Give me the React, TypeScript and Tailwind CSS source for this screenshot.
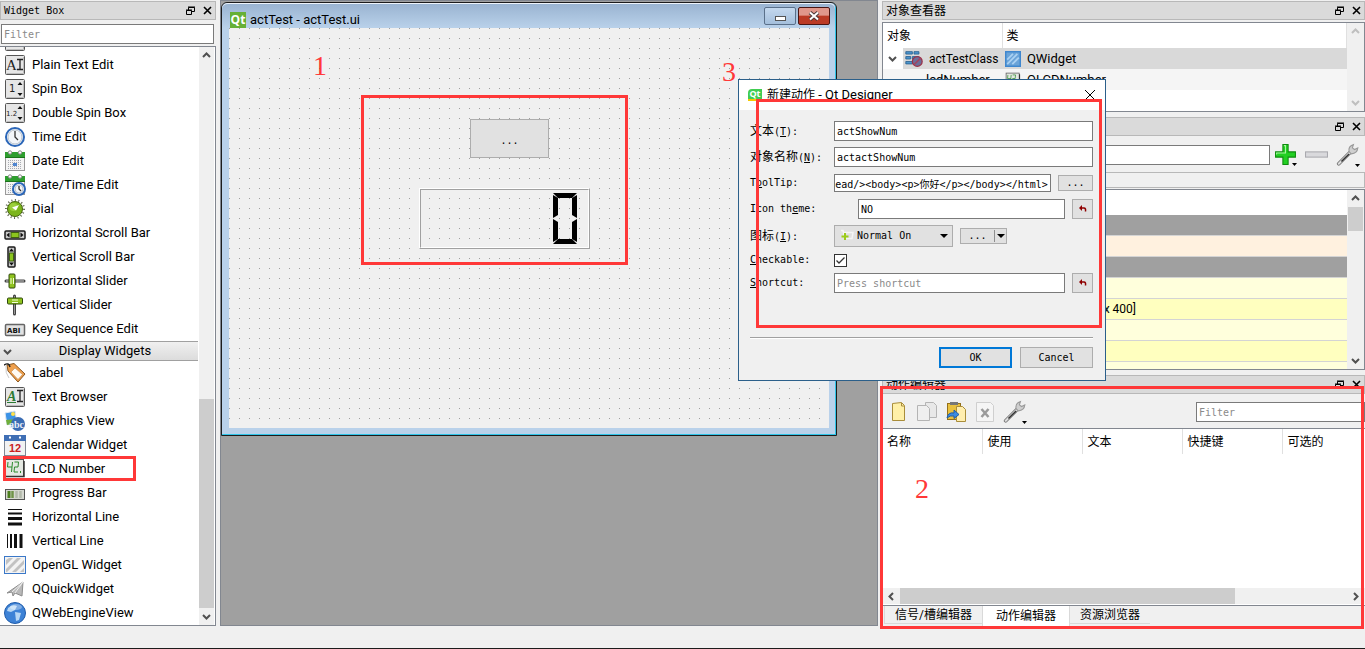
import { useEffect, useRef } from "react"
import type { ReactNode } from "react"

const mono = "font-['DejaVu_Sans_Mono','Noto_Sans_CJK_SC',monospace] text-[10px]"
const field = "min-w-0 border border-[#7a7a7a] bg-white text-black placeholder-[#8a8a8a] outline-none"

const Svg = ({ children, size = 22 }: { children: ReactNode; size?: number }) => (
    <svg width={size} height={size} viewBox="0 0 22 22" className="shrink-0" aria-hidden="true">
        {children}
    </svg>
)

const Tile = () => (
    <>
        <rect x="1.5" y="1.5" width="19" height="19" rx="1" fill="#e6e6e6" stroke="#555" />
        <path d="M2.5 19.5H19.5V3" fill="none" stroke="#bdbdbd" />
    </>
)

const Calendar = () => (
    <>
        <rect x="1.5" y="3.5" width="19" height="17" fill="#f4f4f4" stroke="#9a9a9a" />
        <rect x="1" y="2" width="20" height="6" fill="#2f9e2f" />
        <path d="M1 7.5H21" stroke="#1c741c" />
        <circle cx="6" cy="2.5" r="1.700" fill="#fff" stroke="#8a8a8a" />
        <circle cx="16" cy="2.5" r="1.700" fill="#fff" stroke="#8a8a8a" />
        <path d="M4 10.5H18M4 12.5H18M4 14.5H18M4 16.5H18M4 18.5H18" stroke="#a9acb2" strokeDasharray="1 1" />
    </>
)

const Clock = ({ cx, cy, r }: { cx: number; cy: number; r: number }) => (
    <>
        <circle cx={cx} cy={cy} r={r} fill="#f3f6fa" stroke="#2b66b8" strokeWidth="2" />
        <circle cx={cx} cy={cy} r={r - 2} fill="none" stroke="#b9c2cc" />
        <path d={`M${cx} ${cy - r + 3}V${cy}L${cx + r / 3} ${cy + r / 3}`} fill="none" stroke="#333" strokeWidth="1.3" />
    </>
)

const icons: Record<string, ReactNode> = {
    text: <Tile />,
    plain: (
        <>
            <Tile />
            <text x="2" y="16" fontSize="15" fill="#222" fontFamily="Liberation Serif, serif">A</text>
            <path d="M13 5.5H19M16 5V16M13 15.5H19" stroke="#222" strokeWidth="1.3" />
        </>
    ),
    spin: <><Tile /><text x="5" y="14" fontSize="10" fill="#222" fontFamily="DejaVu Sans">1</text><path d="M13.5 7L16 4L18.5 7ZM13.5 15L16 18L18.5 15Z" fill="#111" /></>,
    dspin: <><Tile /><text x="2" y="14" fontSize="7" fill="#222" fontFamily="DejaVu Sans">1.2</text><path d="M13.5 7L16 4L18.5 7ZM13.5 15L16 18L18.5 15Z" fill="#111" /></>,
    time: <Clock cx={11} cy={11} r={9} />,
    date: <><Calendar /><rect x="9" y="13" width="4" height="3" fill="#4f86d1" /></>,
    datetime: <><Calendar /><Clock cx={15} cy={15} r={6} /></>,
    dial: (
        <>
            <circle cx="11" cy="11" r="9" fill="none" stroke="#5a6347" strokeWidth="2" strokeDasharray="1 2.5" />
            <circle cx="11" cy="11" r="7.5" fill="#7cb51c" stroke="#47660f" />
            <circle cx="9.5" cy="9" r="4" fill="#9bcf3d" />
            <path d="M15 7L12 12.500L8 9.500Z" fill="#fff" />
        </>
    ),
    hscroll: (
        <>
            <rect x="1" y="9" width="20" height="8" rx="1" fill="#c9c9c9" stroke="#1b1b1b" strokeWidth="1.5" />
            <rect x="7" y="10.5" width="8" height="5" fill="#8cc51e" stroke="#3f6110" />
            <path d="M5.5 10.5V15.5L2.5 13ZM16.5 10.5V15.5L19.5 13Z" fill="#111" />
        </>
    ),
    vscroll: (
        <>
            <rect x="4" y="1" width="7" height="20" rx="1" fill="#c9c9c9" stroke="#1b1b1b" strokeWidth="1.5" />
            <rect x="5.5" y="7" width="4" height="8" fill="#8cc51e" stroke="#3f6110" />
            <path d="M5 5.5H10L7.5 2.5ZM5 16.5H10L7.5 19.5Z" fill="#111" />
        </>
    ),
    hslider: (
        <>
            <path d="M2 11H20" stroke="#444" strokeWidth="3" strokeLinecap="round" />
            <path d="M2 11H20" stroke="#ccc" />
            <rect x="5" y="4" width="6" height="14" rx="1" fill="#8fc31f" stroke="#2f480c" />
            <path d="M7 8V14M9.5 8V14" stroke="#f4ffd8" />
        </>
    ),
    vslider: (
        <>
            <path d="M10.5 2V20" stroke="#444" strokeWidth="3" strokeLinecap="round" />
            <path d="M10.5 2V20" stroke="#999" />
            <rect x="3.5" y="4" width="15" height="6" rx="1" fill="#8fc31f" stroke="#2f480c" />
            <path d="M8 6H14M8 8.5H14" stroke="#f4ffd8" />
        </>
    ),
    keyseq: (
        <>
            <rect x="1.5" y="6.5" width="19" height="11" rx="1" fill="#e2e2e2" stroke="#666" strokeWidth="1.5" />
            <text x="3" y="15" fontSize="7" fontWeight="bold" fill="#111" fontFamily="DejaVu Sans">ABI</text>
        </>
    ),
    label: (
        <>
            <path d="M3 3L10 1.5L21 12L14 20L4 9Z" fill="#f0a04c" stroke="#8a5720" />
            <path d="M11 6L18.5 12.5L14 17.5L7 10Z" fill="#fffaf2" stroke="#b97b3a" strokeWidth="0.500" />
            <path d="M0 3Q5 0 6 5" fill="none" stroke="#222" strokeWidth="1.5" />
            <path d="M2 4Q1 11 5 16" fill="none" stroke="#c9c9c9" />
        </>
    ),
    browser: (
        <>
            <Tile />
            <text x="3" y="15" fontSize="14" fill="#2c7a33" fontStyle="italic" fontWeight="bold" fontFamily="Liberation Serif, serif">A</text>
            <path d="M3 16.5H12" stroke="#2c7a33" />
            <path d="M13 4.500H19M16 4V15M13 15.5H19" stroke="#222" strokeWidth="1.300" />
        </>
    ),
    graphics: (
        <>
            <path d="M1 3L11 1L13 13L3 15Z" fill="#3c93e6" stroke="#dfe7f0" />
            <path d="M2 10L12 9L13 13L3 15Z" fill="#6fae3a" />
            <circle cx="9" cy="4" r="2" fill="#ffe14a" />
            <circle cx="14" cy="14" r="7" fill="#3a6cb4" />
            <text x="5" y="18" fontSize="10" fontWeight="bold" fill="#e8eef7" fontFamily="Liberation Serif">abc</text>
        </>
    ),
    calendar: (
        <>
            <rect x="0.5" y="1.5" width="21" height="20" fill="#f2f2f2" stroke="#808894" />
            <rect x="0" y="1" width="22" height="6" fill="#3f6fb5" />
            <path d="M5 3.5H7M15 3.5H17" stroke="#fff" strokeWidth="2" />
            <text x="5" y="18" fontSize="11" fontWeight="bold" fill="#c81f1f" fontFamily="Liberation Sans">12</text>
        </>
    ),
    lcd: (
        <>
            <rect x="1.5" y="1.5" width="18" height="17" fill="#e4e8e2" stroke="#555" />
            <path d="M2 18.5H20V3" fill="none" stroke="#333" strokeWidth="1.500" />
            <path d="M4 4L3.500 9H8M8.500 4L7.500 14M10.5 4H14.5L14 9H10.5L10 14H14M16.5 13V15" fill="none" stroke="#2d8a2d" />
        </>
    ),
    progress: (
        <>
            <rect x="1.5" y="7.5" width="19" height="10" fill="#d5d8d0" stroke="#555" />
            <path d="M5 9V16" stroke="#4d7f1f" strokeWidth="3" />
            <path d="M8.500 9V16" stroke="#6f9448" strokeWidth="2.500" />
            <path d="M12.500 9V16M16.500 9V16" stroke="#b2b9aa" strokeWidth="2.500" />
        </>
    ),
    hline: (
        <>
            <path d="M4 3.5H18" stroke="#111" />
            <path d="M4 7.5H18" stroke="#111" strokeWidth="2" />
            <path d="M4 12.5H18M4 18H18" stroke="#111" strokeWidth="3" />
        </>
    ),
    vline: (
        <>
            <path d="M3.5 4V18" stroke="#111" />
            <path d="M7 4V18" stroke="#111" strokeWidth="2" />
            <path d="M11.5 4V18M17 4V18" stroke="#111" strokeWidth="3" />
        </>
    ),
    opengl: (
        <>
            <rect x="0.5" y="2.5" width="21" height="17" fill="#f3f3f3" stroke="#3b78c8" />
            <path d="M2 10V6L5 4H9L2 11ZM2 18V15L13 4H17L3 18ZM8 18L20 6V10L12 18ZM16 18L20 14V18Z" fill="#c2c2c2" />
        </>
    ),
    quick: (
        <>
            <path d="M3 15L19 4L18 18L11 15L9 18L8 14Z" fill="#b9b9b9" stroke="#8d8d8d" />
            <path d="M8 14L19 4L11 15" fill="none" stroke="#eee" />
        </>
    ),
    web: (
        <>
            <circle cx="11" cy="11" r="10.5" fill="#3d82d6" stroke="#1f5cab" />
            <path d="M4 6Q8 2 13 4L11 8L7 10L3 9ZM11 10L17 11L15 18L12 19Z" fill="#b7d7f5" />
            <ellipse cx="12" cy="5" rx="6" ry="3" fill="#fff" opacity="0.35" />
        </>
    ),
}

const inputWidgets = [
    ["text", ""],
    ["plain", "Plain Text Edit"],
    ["spin", "Spin Box"],
    ["dspin", "Double Spin Box"],
    ["time", "Time Edit"],
    ["date", "Date Edit"],
    ["datetime", "Date/Time Edit"],
    ["dial", "Dial"],
    ["hscroll", "Horizontal Scroll Bar"],
    ["vscroll", "Vertical Scroll Bar"],
    ["hslider", "Horizontal Slider"],
    ["vslider", "Vertical Slider"],
    ["keyseq", "Key Sequence Edit"],
]

const displayWidgets = [
    ["label", "Label"],
    ["browser", "Text Browser"],
    ["graphics", "Graphics View"],
    ["calendar", "Calendar Widget"],
    ["lcd", "LCD Number"],
    ["progress", "Progress Bar"],
    ["hline", "Horizontal Line"],
    ["vline", "Vertical Line"],
    ["opengl", "OpenGL Widget"],
    ["quick", "QQuickWidget"],
    ["web", "QWebEngineView"],
]

const Chevron = ({ dir, color = "#505050" }: { dir: "up" | "down" | "left" | "right"; color?: string }) => {
    const d = { up: "M1 6L4.5 2.5L8 6", down: "M1 3L4.5 6.5L8 3", left: "M6 1L2.5 4.5L6 8", right: "M3 1L6.5 4.5L3 8" }[dir]
    return (
        <svg width="9" height="9" viewBox="0 0 9 9" className="shrink-0" aria-hidden="true">
            <path d={d} fill="none" stroke={color} strokeWidth="2" />
        </svg>
    )
}

const Caret = () => (
    <svg width="8" height="4" viewBox="0 0 8 4" className="shrink-0" aria-hidden="true">
        <path d="M0 0H8L4 4Z" fill="#000" />
    </svg>
)

const DockTitle = ({ children }: { children?: ReactNode }) => (
    <div className="flex h-[19px] shrink-0 items-center gap-2 border border-[#b8b8b8] bg-[#dadada] pr-[3px] pl-[3px]">
        <h2 className="flex-1 whitespace-nowrap">{children}</h2>
        <button aria-label="Float">
            <svg width="9" height="9" viewBox="0 0 9 9" aria-hidden="true">
                <path d="M2.5 4V1.5H8.5V5.5H6M2 1H9M0.5 4.5H5.5V8.5H0.5ZM0 4H6" fill="none" stroke="#000" />
            </svg>
        </button>
        <button aria-label="Close">
            <svg width="9" height="9" viewBox="0 0 9 9" aria-hidden="true">
                <path d="M1 1L8 8M8 1L1 8" stroke="#000" strokeWidth="1.6" />
            </svg>
        </button>
    </div>
)

const WidgetRow = ({ icon, name }: { icon: string; name: string }) => (
    <li className="relative flex h-6 shrink-0 items-center gap-[6px] pl-1">
        <Svg>{icons[icon]}</Svg>
        {name}
        {icon === "lcd" && <span className="absolute -top-px left-[3px] h-[25px] w-[133px] border-3 border-[#ff3838]" />}
    </li>
)

const WidgetBox = () => (
    <aside className="flex w-[216px] shrink-0 flex-col pt-px">
        <DockTitle><span className={mono}>Widget Box</span></DockTitle>
        <input aria-label="Filter widgets" placeholder="Filter" className={`${field} ${mono} mt-1 mr-[2px] ml-px h-5 px-[2px]`} />
        <div className="mt-[2px] flex min-h-0 flex-1 border-y border-r border-[#828790] bg-white">
            <div className="flex min-w-0 flex-1 flex-col justify-end overflow-hidden">
                <ul>{inputWidgets.map(([icon, name]) => <WidgetRow key={icon} icon={icon} name={name} />)}</ul>
                <div className="flex h-5 shrink-0 items-center border-y border-[#a0a0a0] bg-linear-to-b from-[#f0f0f0] to-[#dcdcdc] pl-[3px]">
                    <Chevron dir="down" />
                    <h3 className="flex-1 text-center">Display Widgets</h3>
                </div>
                <ul>{displayWidgets.map(([icon, name]) => <WidgetRow key={icon} icon={icon} name={name} />)}</ul>
            </div>
            <div className="mr-px ml-px flex w-[15px] flex-col items-center bg-[#f0f0f0] py-1">
                <Chevron dir="up" />
                <div className="flex-1" />
                <div className="mb-1 h-[209px] w-full bg-[#cdcdcd]" />
                <Chevron dir="down" />
            </div>
        </div>
    </aside>
)

const QtLogo = () => (
    <span className="flex size-4 items-center justify-center bg-[#66b036] font-['Open_Sans',sans-serif] text-[12px] leading-4 font-bold text-white">Qt</span>
)

const LcdZero = () => (
    <div role="img" aria-label="0" className="flex h-[51px] w-6 flex-col justify-between">
        <div className="border-x-[5px] border-t-[5px] border-x-transparent border-t-black" />
        <div className="-mt-1 flex justify-between">
            <div className="h-[23px] border-y-[3px] border-l-[5px] border-y-transparent border-l-black" />
            <div className="h-[23px] border-y-[3px] border-r-[5px] border-y-transparent border-r-black" />
        </div>
        <div className="-mb-1 flex justify-between">
            <div className="h-[23px] border-y-[3px] border-l-[5px] border-y-transparent border-l-black" />
            <div className="h-[23px] border-y-[3px] border-r-[5px] border-y-transparent border-r-black" />
        </div>
        <div className="border-x-[5px] border-b-[5px] border-x-transparent border-b-black" />
    </div>
)

const FormWindow = () => (
    <section className="absolute top-px left-0 rounded-t-md border border-[#1c1c1c] bg-[#b9d1ea] px-[7px] pb-[7px] shadow-[inset_-1px_-1px_0_#2ec4e8]">
        <header className="-ml-[7px] -mr-[6px] flex h-[25px] items-center rounded-t-md border-t border-[#eef4fb] bg-linear-to-b from-[#9ab4d1] to-[#b9d1ea] pt-2 pr-[5px] pl-2">
            <QtLogo />
            <h1 className="ml-1 flex-1">actTest - actTest.ui</h1>
            <button aria-label="Minimize" className="mb-2 flex h-[18px] w-8 items-center justify-center rounded-xs border border-[#5a708a] bg-linear-to-b from-[#c4d8ee] to-[#a4bfdc] pt-1">
                <span className="h-[5px] w-[11px] border border-[#555] bg-white" />
            </button>
            <button aria-label="Close" className="mb-2 ml-[2px] flex h-[18px] w-8 items-center justify-center rounded-xs border border-[#4a1512] bg-linear-to-b from-[#e0978b] from-45% to-[#bb3a25] to-50%">
                <svg width="12" height="10" viewBox="0 0 12 10" aria-hidden="true">
                    <path d="M2 1.5L10 8.5M10 1.5L2 8.5" stroke="#4c3a3a" strokeWidth="4" />
                    <path d="M2 1.5L10 8.5M10 1.5L2 8.5" stroke="#fff" strokeWidth="2" />
                </svg>
            </button>
        </header>
        <div className="relative h-[400px] w-[600px] bg-[#f0f0f0] bg-[conic-gradient(from_270deg_at_1px_1px,#a0a0a0_90deg,transparent_0)] bg-size-[10px_10px]">
            <span className="absolute top-5 left-[84px] font-['Liberation_Serif',serif] text-[28px] leading-9 text-[#ff3838]">1</span>
            <span className="absolute top-[26px] left-[493px] font-['Liberation_Serif',serif] text-[28px] leading-9 text-[#ff3838]">3</span>
            <button className={`${mono} absolute top-[91px] left-[241px] h-[39px] w-[79px] border border-[#adadad] bg-[#e1e1e1] pt-1`}>...</button>
            <div className="absolute top-[160px] left-[190px] flex h-[61px] w-[171px] items-center justify-end border border-t-white border-r-[#a0a0a0] border-b-[#a0a0a0] border-l-white">
                <div className="flex size-full items-center justify-end border border-t-[#a0a0a0] border-r-white border-b-white border-l-[#a0a0a0] pr-[11px]">
                    <LcdZero />
                </div>
            </div>
            <span className="absolute top-[67px] left-[132px] h-[170px] w-[267px] border-3 border-[#ff3838]" />
        </div>
    </section>
)

const ObjectInspector = () => (
    <div className="mt-[2px] flex h-[90px] shrink-0 border border-[#828790] bg-white">
        <div className="min-w-0 flex-1 overflow-hidden">
            <table className="w-full table-fixed text-left">
                <colgroup>
                    <col className="w-[119px]" />
                    <col />
                </colgroup>
                <thead className="text-[12px]">
                    <tr className="h-[25px]">
                        <th className="border-r border-[#e0e0e0] p-0 pl-1 font-normal">对象</th>
                        <th className="border-r border-[#e0e0e0] p-0 pl-1 font-normal">类</th>
                    </tr>
                </thead>
                <tbody>
                    <tr className="h-[21px]">
                        <td className="p-0">
                            <div className="flex h-[21px] items-center">
                                <span className="w-5 pl-[5px]"><Chevron dir="down" /></span>
                                <span className="flex h-full flex-1 items-center gap-[6px] bg-[#d9d9d9] pl-[2px] text-[12px]">
                                    <Svg size={18}>
                                        <path d="M1 2H9V5H1ZM11 2H17V5H11ZM1 8H7V11H1ZM9 8H17V11H9ZM1 14H9V17H1Z" fill="#4c95cc" stroke="#235f8f" />
                                        <circle cx="15" cy="14" r="6" fill="#6b6f9b" stroke="#9c3048" strokeWidth="1.5" />
                                        <path d="M11 18L19 10" stroke="#a34460" strokeWidth="2" />
                                    </Svg>
                                    actTestClass
                                </span>
                            </div>
                        </td>
                        <td className="bg-[#d9d9d9] p-0">
                            <div className="flex items-center gap-[6px] pl-[3px]">
                                <Svg size={16}>
                                    <rect x="1" y="1" width="20" height="20" fill="#6aa3d8" stroke="#3f87cf" strokeWidth="2" />
                                    <path d="M3 12L11 4M3 18L17 4M10 18L19 9" stroke="#a9d0f2" strokeWidth="2.5" />
                                </Svg>
                                QWidget
                            </div>
                        </td>
                    </tr>
                    <tr className="h-[21px] bg-[#f5f5f5]">
                        <td className="p-0 pl-[43px]">lcdNumber</td>
                        <td className="p-0">
                            <div className="flex items-center gap-[6px] pl-[3px]"><Svg size={16}>{icons.lcd}</Svg>QLCDNumber</div>
                        </td>
                    </tr>
                </tbody>
            </table>
        </div>
        <div className="flex w-[17px] flex-col items-center justify-between bg-[#f0f0f0] py-1">
            <Chevron dir="up" color="#bfbfbf" />
            <Chevron dir="down" color="#bfbfbf" />
        </div>
    </div>
)

const Wrench = () => (
    <span className="relative block">
        <Svg size={24}>
            <path d="M2.5 19L13 8.5" stroke="#777" strokeWidth="3.500" strokeLinecap="round" />
            <path d="M2.5 19L13 8.5" stroke="#ddd" strokeWidth="1.800" strokeLinecap="round" />
            <path d="M5 17L12 10" stroke="#333" strokeWidth="1.300" />
            <path d="M12 8Q11 3 16 1.500L15 4.500L17 6L20 4.5Q19.500 9.500 14 10Z" fill="#cfcfcf" stroke="#9a9a9a" />
        </Svg>
        <svg width="5" height="3" viewBox="0 0 5 3" className="absolute right-0 bottom-0" aria-hidden="true"><path d="M0 0H5L2.5 3Z" /></svg>
    </span>
)

const propertyRows = ["bg-[#a0a0a0]", "bg-[#fff1df]", "bg-[#a0a0a0]", "bg-[#ffffdc]", "bg-[#ffffbf]", "bg-[#ffffdc]", "bg-[#ffffbf]", "bg-[#ffffdc]"]

const PropertyEditor = () => (
    <>
        <div className="flex h-9 shrink-0 items-center gap-1 pt-px pr-[5px]">
            <input aria-label="Filter properties" className={`${field} ${mono} h-5 flex-1 px-1`} />
            <button aria-label="Add property" className="relative">
                <Svg size={23}>
                    <path d="M8.5 1.5H13.5V8.5H20.5V13.5H13.5V20.5H8.5V13.5H1.5V8.5H8.5Z" fill="#22cf22" stroke="#0d8a0d" />
                    <path d="M9.5 2.5H11V9.5H2.5V11" fill="none" stroke="#a8f5a0" />
                </Svg>
                <svg width="5" height="3" viewBox="0 0 5 3" className="absolute right-0 bottom-0" aria-hidden="true"><path d="M0 0H5L2.5 3Z" /></svg>
            </button>
            <button aria-label="Remove property" className="mx-1">
                <Svg size={23}><rect x="0.5" y="8.5" width="21" height="5" fill="#d9d9dc" stroke="#a9a9ae" /></Svg>
            </button>
            <button aria-label="Configure"><Wrench /></button>
        </div>
        <div className="h-4 shrink-0 border border-[#b8b8b8]" />
        <div className="mt-px flex h-[181px] shrink-0 border border-[#828790] bg-white">
            <div className="flex-1 overflow-hidden pt-[25px]">
                {propertyRows.map((bg, i) => (
                    <div key={i} className={`${bg} h-[21px] border-b border-[#d4d4d4]`}>
                        {i === 4 && <p className="w-[253px] text-right text-[12px] leading-5">[(0, 0), 600 x 400]</p>}
                    </div>
                ))}
            </div>
            <div className="flex w-[17px] flex-col items-center bg-[#f0f0f0] py-1">
                <Chevron dir="up" />
                <div className="mt-1 h-6 w-[15px] bg-[#cdcdcd]" />
                <div className="flex-1" />
                <Chevron dir="down" />
            </div>
        </div>
    </>
)

const ActionEditor = () => (
    <>
        <div className="flex h-[34px] shrink-0 items-center justify-between pt-[2px]">
            <div className="flex items-center gap-[7px] pl-[5px]">
                <button aria-label="New action">
                    <Svg>
                        <path d="M5.5 2.5L14.5 1.5L17.5 4.5V19.5H5.5Z" fill="#fff0a8" stroke="#a98d3a" />
                        <path d="M14.5 2V5H17" fill="none" stroke="#a98d3a" />
                    </Svg>
                </button>
                <button aria-label="Copy">
                    <Svg>
                        <path d="M9.5 1.5H17.5L20.5 4.5V16.5H9.5Z" fill="#e8e8e8" stroke="#b4b4b4" />
                        <path d="M1.5 4.5H10.5L13.5 7.5V19.5H1.5Z" fill="#efefef" stroke="#b4b4b4" />
                    </Svg>
                </button>
                <button aria-label="Paste">
                    <Svg>
                        <rect x="2.5" y="2.5" width="13" height="16" fill="#e9c13f" stroke="#94701a" />
                        <rect x="5" y="1" width="8" height="3" fill="#777" />
                        <path d="M11.5 5.5H17.5L20.5 8.5V20.5H11.5Z" fill="#ffeeb0" stroke="#a98d3a" />
                        <path d="M2 17Q3 11 9 12V9L14 13.5L9 17.5V15Q5 14 2 17Z" fill="#3b8be0" stroke="#1c5ca8" />
                    </Svg>
                </button>
                <button aria-label="Delete">
                    <Svg>
                        <path d="M2.5 1.5H16.5L19.5 4.5V20.5H2.5Z" fill="#f5f5f5" stroke="#cfcfcf" />
                        <path d="M7.5 8L14.5 16M14.5 8L7.5 16" stroke="#9a9a9a" strokeWidth="2.5" />
                    </Svg>
                </button>
                <button aria-label="Configure actions"><Wrench /></button>
            </div>
            <input aria-label="Filter actions" placeholder="Filter" className={`${field} ${mono} h-5 w-[169px] px-[2px]`} />
        </div>
        <div className="flex min-h-0 flex-1 flex-col justify-between border-y border-[#828790] bg-white">
            <table className="w-full table-fixed text-left text-[12px]">
                <thead>
                    <tr className="h-[25px]">
                        {["名称", "使用", "文本", "快捷键"].map((name) => (
                            <th key={name} className="w-[100px] border-r border-[#e0e0e0] p-0 pl-[5px] font-normal">{name}</th>
                        ))}
                        <th className="p-0 pl-[5px] font-normal">可选的</th>
                    </tr>
                </thead>
            </table>
            <div className="mb-px flex h-4 items-center bg-[#f0f0f0] px-[5px]">
                <Chevron dir="left" />
                <div className="mx-1 flex h-full flex-1"><div className="w-[75%] bg-[#cdcdcd]" /></div>
                <Chevron dir="right" />
            </div>
        </div>
        <div role="tablist" className="flex h-5 shrink-0 items-start pl-[2px] text-[12px]">
            <button role="tab" className="h-[18px] w-[98px] border-b border-l border-[#d9d9d9]">信号/槽编辑器</button>
            <button role="tab" aria-selected="true" className="h-5 w-[88px] border-x border-[#d9d9d9] bg-white">动作编辑器</button>
            <button role="tab" className="h-[18px] w-20 border-b border-[#d9d9d9]">资源浏览器</button>
        </div>
    </>
)

const ResetButton = () => (
    <button type="button" aria-label="Reset" className="flex h-5 w-[21px] shrink-0 items-center justify-center border border-[#adadad] bg-[#e1e1e1]">
        <svg width="8" height="8" viewBox="0 0 8 8" aria-hidden="true">
            <path d="M0 3L3 0V6Z" fill="#8f0000" />
            <path d="M2 3H5Q7 3 6.5 6.5" fill="none" stroke="#8f0000" strokeWidth="1.5" />
        </svg>
    </button>
)

const Row = ({ id, label, children, height = "h-5" }: { id: string; label: ReactNode; children: ReactNode; height?: string }) => (
    <div className={`${height} flex items-center`}>
        <label htmlFor={id} className="w-[84px] shrink-0 whitespace-nowrap">{label}</label>
        <div className="flex min-w-0 flex-1 items-center gap-[7px]">{children}</div>
    </div>
)

const Cjk = ({ children }: { children: string }) => <span className="text-[12px]">{children}</span>

const ActionDialog = () => {
    const tip = useRef<HTMLInputElement>(null)

    // keep the tail of the tooltip markup in view
    useEffect(() => {
        if (tip.current) tip.current.scrollLeft = tip.current.scrollWidth
    }, [])

    return (
        <section role="dialog" aria-labelledby="dialog-title" className="absolute top-[79px] left-[738px] flex h-[302px] w-[368px] flex-col border border-[#2b5f8a] bg-[#f0f0f0]">
            <header className="flex h-[30px] shrink-0 items-center bg-white px-[9px]">
                <span className="h-3 w-[14px] rounded-tl-sm border-b-2 border-[#f5c800] bg-[#41cd52] text-center font-['Open_Sans',sans-serif] text-[9px] leading-[10px] font-bold text-white">Qt</span>
                <h2 id="dialog-title" className="ml-[5px] flex-1"><Cjk>新建动作</Cjk> - Qt Designer</h2>
                <button aria-label="Close dialog">
                    <svg width="12" height="12" viewBox="0 0 12 12" aria-hidden="true"><path d="M1 1L11 11M11 1L1 11" stroke="#000" /></svg>
                </button>
            </header>
            <form className={`${mono} flex flex-1 flex-col gap-[6px] pt-[11px] pr-3 pb-3 pl-[11px]`} onSubmit={(e) => e.preventDefault()}>
                <Row id="text" label={<><Cjk>文本</Cjk>(<u>T</u>):</>}>
                    <input id="text" defaultValue="actShowNum" className={`${field} h-5 flex-1 px-[2px]`} />
                </Row>
                <Row id="name" label={<><Cjk>对象名称</Cjk>(<u>N</u>):</>}>
                    <input id="name" defaultValue="actactShowNum" className={`${field} h-5 flex-1 px-[2px]`} />
                </Row>
                <Row id="tip" label={<>T<u>o</u>olTip:</>}>
                    <input id="tip" ref={tip} defaultValue="<html><head/><body><p>你好</p></body></html>" className={`${field} h-[18px] flex-1 pr-[2px]`} />
                    <button type="button" className="h-4 w-[35px] border border-[#adadad] bg-[#e1e1e1] leading-3">...</button>
                </Row>
                <Row id="theme" label={<>Icon th<u>e</u>me:</>}>
                    <input id="theme" defaultValue="NO" className={`${field} ml-6 h-5 flex-1 px-[2px]`} />
                    <ResetButton />
                </Row>
                <Row id="icon" label={<><Cjk>图标</Cjk>(<u>I</u>):</>} height="h-[22px]">
                    <div className="relative">
                        <select id="icon" className="h-[22px] w-[119px] appearance-none border border-[#adadad] bg-[#e1e1e1] pl-[22px]">
                            <option>Normal On</option>
                        </select>
                        <svg width="14" height="14" viewBox="0 0 14 14" className="pointer-events-none absolute top-1 left-[6px]" aria-hidden="true">
                            <path d="M1 1.5H3L5 9.5H12L13 3.5H4" fill="none" stroke="#f5f5f5" strokeWidth="1.5" />
                            <path d="M5 4V11M1.5 7.5H8.5" stroke="#9ccc1c" strokeWidth="2" />
                        </svg>
                        <span className="pointer-events-none absolute top-[9px] right-[5px] flex"><Caret /></span>
                    </div>
                    <div className="flex h-4 w-[47px] border border-[#adadad] bg-[#e1e1e1]">
                        <button type="button" className="flex-1 leading-3">...</button>
                        <button type="button" aria-label="More icon sources" className="my-px flex w-3 items-center justify-center border-l border-[#8f8f8f]"><Caret /></button>
                    </div>
                </Row>
                <Row id="checkable" label={<><u>C</u>heckable:</>} height="h-[14px]">
                    <span className="relative flex size-[13px]">
                        <input id="checkable" type="checkbox" defaultChecked className="size-[13px] appearance-none border border-[#333] bg-white" />
                        <svg width="13" height="13" viewBox="0 0 13 13" className="pointer-events-none absolute inset-0" aria-hidden="true">
                            <path d="M2.5 6.5L5 9L10.5 3.5" fill="none" stroke="#333" strokeWidth="1.3" />
                        </svg>
                    </span>
                </Row>
                <Row id="shortcut" label={<><u>S</u>hortcut:</>}>
                    <input id="shortcut" placeholder="Press shortcut" className={`${field} h-5 flex-1 px-[2px]`} />
                    <ResetButton />
                </Row>
                <div className="mt-auto mb-[2px] border-t border-b border-t-[#a0a0a0] border-b-white" />
                <div className="flex justify-end gap-2">
                    <button type="submit" className="h-[21px] w-[73px] border-2 border-[#0078d7] bg-[#e1e1e1] leading-4">OK</button>
                    <button type="button" className="h-[21px] w-[73px] border border-[#adadad] bg-[#e1e1e1] leading-4">Cancel</button>
                </div>
            </form>
            <span className="pointer-events-none absolute top-[19px] left-[17px] h-[229px] w-[346px] border-3 border-[#ff3838]" />
        </section>
    )
}

const App = () => {
    return (
        <div className="relative flex h-screen flex-col overflow-hidden bg-[#f0f0f0] font-['Roboto','Noto_Sans_CJK_SC',sans-serif] text-[13px] leading-4 text-black">
            <div className="flex min-h-0 flex-1">
                <WidgetBox />
                <main className="relative mx-1 min-w-0 flex-1 border border-[#828790] bg-[#a0a0a0]">
                    <FormWindow />
                </main>
                <aside className="relative flex w-[483px] shrink-0 flex-col pt-px">
                    <DockTitle><span className="text-[12px]">对象查看器</span></DockTitle>
                    <ObjectInspector />
                    <div className="h-[5px] shrink-0" />
                    <DockTitle />
                    <PropertyEditor />
                    <div className="h-[5px] shrink-0" />
                    <DockTitle><span className="text-[12px]">动作编辑器</span></DockTitle>
                    <ActionEditor />
                    <span className="absolute top-[475px] left-[33px] font-['Liberation_Serif',serif] text-[28px] leading-7 text-[#ff3838]">2</span>
                    <span className="pointer-events-none absolute top-[386px] right-px -left-[2px] h-[243px] border-3 border-[#ff3838]" />
                </aside>
            </div>
            <footer className="h-[23px] shrink-0 border-b border-[#1c1c1c]" />
            <ActionDialog />
        </div>
    )
}

export default App
